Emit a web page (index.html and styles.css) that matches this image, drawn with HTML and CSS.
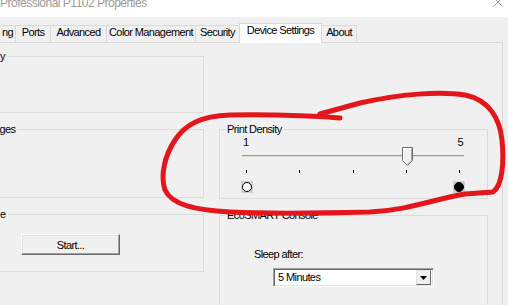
FILE: index.html
```html
<!DOCTYPE html>
<html>
<head>
<meta charset="utf-8">
<link rel="stylesheet" href="styles.css">
</head>
<body>
<div class="titlebar">
  <span class="title">Professional P1102 Properties</span>
  <svg class="close" width="10" height="10" viewBox="0 0 10 10"><path d="M0.5 0.5 L9.5 9.5 M9.5 0.5 L0.5 9.5" stroke="#9a9a9a" stroke-width="1" fill="none"/></svg>
</div>
<div class="tabs">
  <div class="tab t-ng">ng</div>
  <div class="tab t-ports">Ports</div>
  <div class="tab t-adv">Advanced</div>
  <div class="tab t-color">Color Management</div>
  <div class="tab t-sec">Security</div>
  <div class="tab t-dev active">Device Settings</div>
  <div class="tab t-about">About</div>
</div>
<div class="panel">
  <div class="columns">
    <div class="col col-left">
      <div class="group open g1"><span class="legend">y</span></div>
      <div class="group open g2"><span class="legend legend-ages">ages</span></div>
      <div class="group open g3"><span class="legend">e</span>
        <button class="btn">Start...</button>
      </div>
    </div>
    <div class="col col-right">
      <div class="group density">
        <span class="legend">Print Density</span>
        <div class="scale-labels"><span>1</span><span>5</span></div>
        <div class="slider">
          <div class="track"></div>
          <svg class="thumb" width="11" height="19" viewBox="0 0 11 19">
            <path d="M0.5 0.5 H10.5 V13.5 L5.5 18.5 L0.5 13.5 Z" fill="#f0f0f0" stroke="#6f6f6f"/>
            <path d="M1.5 13 V1.5 H9.5" fill="none" stroke="#ffffff"/>
            <path d="M9.5 1.5 V13.2 L5.5 17.2" fill="none" stroke="#a8a8a8"/>
          </svg>
        </div>
        <div class="ticks"><i></i><i></i><i></i><i></i><i></i></div>
        <div class="ends">
          <span class="swatch"><span class="dot light"></span></span>
          <span class="swatch"><span class="dot dark"></span></span>
        </div>
      </div>
      <div class="group eco">
        <span class="legend">EcoSMART Console</span>
        <div class="sleep-label">Sleep after:</div>
        <div class="combo">
          <span class="combo-text">5 Minutes</span>
          <span class="combo-btn"><svg width="7" height="4" viewBox="0 0 7 4"><path d="M0 0 H7 L3.5 4 Z" fill="#000"/></svg></span>
        </div>
      </div>
    </div>
  </div>
</div>
<svg class="scribble" width="508" height="305" viewBox="0 0 508 305">
  <path d="M340 118 C330 117 280 114 230 115 C200 116 185 125 175 140 C165 155 160 175 165 190 C172 205 195 210 230 212 C270 214 330 213 370 212 C410 210 430 200 465 194 L493 192 C503 185 504 160 502 140 C500 120 490 100 465 95 C440 91 400 94 360 103 L320 114" fill="none" stroke="#e3161c" stroke-width="5" stroke-linecap="round" stroke-linejoin="round"/>
</svg>
</body>
</html>
```
FILE: styles.css
```css
* { box-sizing: border-box; }

body {
  margin: 0;
  width: 508px;
  height: 305px;
  overflow: hidden;
  position: relative;
  background: #f0f0f0;
  font-family: "Liberation Sans", Arial, sans-serif;
  font-size: 11px;
  letter-spacing: -0.6px;
  color: #000;
}

.titlebar {
  height: 17px;
  background: #ffffff;
  display: flex;
  justify-content: space-between;
  align-items: flex-start;
  overflow: hidden;
}

.title {
  font-size: 12px;
  line-height: 12px;
  color: #9a9a9a;
  margin-top: -3px;
  letter-spacing: -0.5px;
  white-space: nowrap;
}

.close {
  margin-top: -3px;
  margin-right: 5px;
}

.tabs {
  height: 25px;
  display: flex;
  align-items: flex-end;
  position: relative;
  z-index: 1;
}

.tab {
  height: 17px;
  border: 1px solid #d9d9d9;
  border-bottom: none;
  margin-right: -1px;
  text-align: center;
  line-height: 13px;
  white-space: nowrap;
  overflow: hidden;
  background: #f0f0f0;
}

.tab.active {
  height: 20px;
  margin-bottom: -1px;
  background: #ffffff;
  position: relative;
  z-index: 2;
}

.t-ng { width: 21px; margin-left: -5px; text-align: right; padding-right: 2px; }
.t-ports { width: 36px; }
.t-adv { width: 57px; }
.t-color { width: 90px; }
.t-sec { width: 45px; }
.t-dev { width: 83px; }
.t-about { width: 36px; }

.panel {
  width: 503px;
  height: 263px;
  overflow: hidden;
  border-top: 1px solid #d9d9d9;
  border-right: 1px solid #d9d9d9;
}

.columns {
  display: flex;
  gap: 15px;
}

.col { display: flex; flex-direction: column; }
.col-left { width: 204px; padding-top: 13px; gap: 16px; }
.col-right { width: 269px; padding-top: 86px; gap: 16px; }

.group {
  border: 1px solid #dcdcdc;
  display: flex;
  flex-direction: column;
  align-items: flex-start;
}

.group.open { border-left: none; }

.legend {
  display: block;
  margin: -7px 0 0 5px;
  padding: 0 2px;
  line-height: 13px;
  background: #f0f0f0;
  white-space: nowrap;
}

.group.open .legend { margin-left: 0; padding-left: 0; }
.group.open .legend-ages { margin-left: -6px; }

.g1 { height: 57px; }
.g2 { height: 69px; }
.g3 { height: 58px; }

.btn {
  margin: 13px 0 0 21px;
  width: 99px;
  height: 21px;
  padding: 0;
  font: inherit;
  letter-spacing: inherit;
  background: #f0f0f0;
  border: 1px solid;
  border-color: #ffffff #696969 #696969 #ffffff;
  box-shadow: inset -1px -1px 0 #a0a0a0, inset 1px 1px 0 #e3e3e3;
  color: #000;
}

.density {
  height: 70px;
  align-items: stretch;
}

.density .legend { align-self: flex-start; }

.scale-labels {
  display: flex;
  justify-content: space-between;
  padding: 0 24px 0 23px;
  line-height: 13px;
}

.slider {
  position: relative;
  height: 19px;
  margin: 0 23px 0 22px;
}

.track {
  margin-top: 6px;
  height: 2px;
  border-top: 1px solid #9a9a9a;
  border-bottom: 1px solid #dadada;
}

.thumb {
  position: absolute;
  left: 160px;
  top: -2px;
}

.ticks {
  display: flex;
  justify-content: space-between;
  padding: 0 27px 0 26px;
  margin-top: 2px;
}

.ticks i {
  display: block;
  width: 1px;
  height: 3px;
  background: #000;
}

.ends {
  display: flex;
  justify-content: space-between;
  padding: 0 22px 0 21px;
  margin-top: 8px;
}

.swatch {
  width: 12px;
  height: 12px;
  background: #cfcfcf;
  display: flex;
  align-items: center;
  justify-content: center;
}

.dot {
  width: 10px;
  height: 10px;
  border-radius: 50%;
  border: 1px solid #000;
}

.dot.light { background: #ffffff; }
.dot.dark { background: #000000; }

.eco { height: 120px; }

.sleep-label {
  margin: 26px 0 0 34px;
  line-height: 13px;
}

.combo {
  margin: 7px 0 0 53px;
  width: 161px;
  height: 19px;
  background: #ffffff;
  border: 1px solid;
  border-color: #a0a0a0 #ffffff #ffffff #a0a0a0;
  box-shadow: inset 1px 1px 0 #696969, inset -1px -1px 0 #e3e3e3;
  display: flex;
  align-items: center;
  justify-content: space-between;
  padding: 2px 2px 2px 4px;
}

.combo-text { line-height: 13px; }

.combo-btn {
  width: 15px;
  height: 15px;
  background: #f0f0f0;
  border: 1px solid;
  border-color: #e3e3e3 #696969 #696969 #e3e3e3;
  display: flex;
  align-items: center;
  justify-content: center;
}

.scribble {
  position: absolute;
  left: 0;
  top: 0;
  pointer-events: none;
}
```
